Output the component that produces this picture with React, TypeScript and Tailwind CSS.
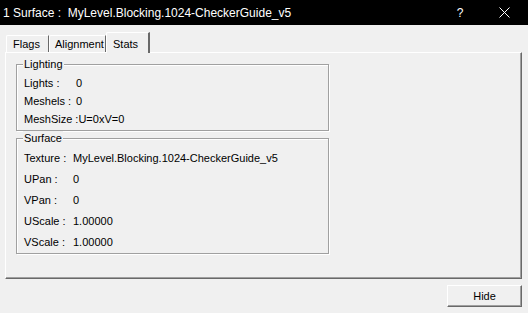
import React from 'react';

const font = { fontFamily: '"Liberation Sans", Arial, sans-serif' };

function Row({ label, value, h, vx }: { label: string; value: string; h: string; vx: string }) {
    return (
        <div className={`flex ${h} items-center whitespace-nowrap`}>
            <span className={`${vx} shrink-0`}>{label}</span>
            <span>{value}</span>
        </div>
    );
}

export default function App() {
    return (
        <div className="w-[528px] h-[313px] bg-[#f0f0f0] text-[11px] text-black overflow-hidden" style={font}>
            {/* Title bar */}
            <div className="h-[25px] bg-black text-white flex items-center text-[12px]">
                <span className="pl-[3px] flex-1 whitespace-pre">1 Surface :  MyLevel.Blocking.1024-CheckerGuide_v5</span>
                <span className="w-[10px] text-center mr-[34px]">?</span>
                <svg width="11" height="11" viewBox="0 0 11 11" className="mr-[18px]">
                    <path d="M0.5 0.5 L10.5 10.5 M10.5 0.5 L0.5 10.5" stroke="white" strokeWidth="1" />
                </svg>
            </div>

            {/* Tabs */}
            <div className="mt-[7px] ml-[6px] flex items-end h-[20px] relative z-10">
                <div className="w-[43px] h-[17px] border-l border-t border-white border-r border-r-[#696969] rounded-tl-[2px] flex items-center pl-[6px]">
                    Flags
                </div>
                <div className="w-[57px] h-[17px] border-l border-t border-white border-r border-r-[#696969] rounded-tl-[2px] flex items-center pl-[5px]">
                    Alignment
                </div>
                <div className="w-[44px] h-[21px] -mb-[1px] bg-[#f0f0f0] border-l border-t border-white border-r-2 border-r-[#696969] rounded-tl-[2px] flex items-start pt-[3px] pl-[6px]">
                    Stats
                </div>
            </div>

            {/* Tab panel */}
            <div className="ml-[5px] w-[517px] h-[227px] border-t border-l border-white border-r border-b border-r-[#696969] border-b-[#696969] shadow-[inset_-1px_-1px_0_#a0a0a0] pt-[11px] pl-[10px]">
                {/* Lighting */}
                <div className="relative w-[313px] border border-[#a0a0a0] shadow-[inset_1px_1px_0_#fff,1px_1px_0_#fff] pt-[9px] pb-[2px] pl-[7px]">
                    <span className="absolute -top-[8px] left-[6px] px-[1px] bg-[#f0f0f0] leading-[14px]">Lighting</span>
                    <Row label="Lights :" value="0" h="h-[18px]" vx="min-w-[52px]" />
                    <Row label="Meshels :" value="0" h="h-[18px]" vx="min-w-[52px]" />
                    <Row label="MeshSize :" value="U=0xV=0" h="h-[18px]" vx="min-w-[51px]" />
                </div>

                {/* Surface */}
                <div className="relative mt-[7px] w-[313px] border border-[#a0a0a0] shadow-[inset_1px_1px_0_#fff,1px_1px_0_#fff] pt-[9px] pl-[7px]">
                    <span className="absolute -top-[8px] left-[6px] px-[1px] bg-[#f0f0f0] leading-[14px]">Surface</span>
                    <Row label="Texture :" value="MyLevel.Blocking.1024-CheckerGuide_v5" h="h-[21px]" vx="min-w-[49px]" />
                    <Row label="UPan :" value="0" h="h-[21px]" vx="min-w-[49px]" />
                    <Row label="VPan :" value="0" h="h-[21px]" vx="min-w-[49px]" />
                    <Row label="UScale :" value="1.00000" h="h-[21px]" vx="min-w-[49px]" />
                    <Row label="VScale :" value="1.00000" h="h-[21px]" vx="min-w-[49px]" />
                </div>
            </div>

            {/* Footer */}
            <div className="flex justify-end mt-[6px] pr-[6px]">
                <button className="w-[75px] h-[22px] bg-[#f0f0f0] border-t border-l border-white border-r border-b border-r-[#696969] border-b-[#696969] shadow-[inset_-1px_-1px_0_#a0a0a0] flex items-center justify-center">
                    Hide
                </button>
            </div>
        </div>
    );
}
